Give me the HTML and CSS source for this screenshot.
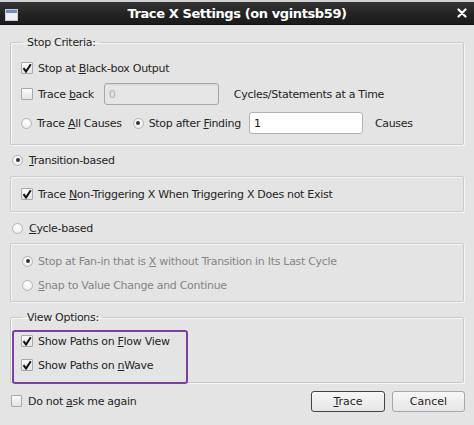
FILE: index.html
```html
<!DOCTYPE html>
<html lang="en">
<head>
    <meta charset="UTF-8">
    <title>Trace X Settings</title>
    <link rel="stylesheet" href="styles.css">
</head>
<body>
    <div class="window">
        <div class="titlebar">
            <svg class="win-icon" width="13" height="12" viewBox="0 0 13 12">
                <rect x="0.5" y="0.5" width="12" height="11" fill="#eef1f6" stroke="#c8ccd4"/>
                <rect x="1" y="1" width="11" height="3" fill="#6f8fc4"/>
            </svg>
            <div class="title">Trace X Settings (on vgintsb59)</div>
            <svg class="close" width="10" height="10" viewBox="0 0 10 10">
                <path d="M1.5 1.5 L8.5 8.5 M8.5 1.5 L1.5 8.5" stroke="#fff" stroke-width="2.2" stroke-linecap="round"/>
            </svg>
        </div>

        <div class="content">
            <fieldset class="group stop-group">
                <legend>Stop Criteria:</legend>
                <div class="row">
                    <span class="check on"><svg viewBox="0 0 12 12"><path d="M2.5 6.2 L5 9.5 L9.8 2.2" /></svg></span>
                    <span>Stop at <u>B</u>lack-box Output</span>
                </div>
                <div class="row row-back">
                    <span class="check"></span>
                    <span>Trace <u>b</u>ack</span>
                    <span class="field disabled field-back">0</span>
                    <span class="after-back">Cycles/Statements at a Time</span>
                </div>
                <div class="row row-find">
                    <span class="radio"></span>
                    <span>Trace <u>A</u>ll Causes</span>
                    <span class="radio on radio-gap"></span>
                    <span>Stop after <u>F</u>inding</span>
                    <span class="field field-find">1</span>
                    <span class="after-find">Causes</span>
                </div>
            </fieldset>

            <div class="row mode-row first-mode">
                <span class="radio on"></span>
                <span><u>T</u>ransition-based</span>
            </div>
            <div class="subframe sub-trans">
                <div class="row">
                    <span class="check on"><svg viewBox="0 0 12 12"><path d="M2.5 6.2 L5 9.5 L9.8 2.2" /></svg></span>
                    <span>Trace <u>N</u>on-Triggering X When Triggering X Does not Exist</span>
                </div>
            </div>

            <div class="row mode-row">
                <span class="radio"></span>
                <span><u>C</u>ycle-based</span>
            </div>
            <div class="subframe sub-cycle">
                <div class="row dim">
                    <span class="radio on"></span>
                    <span>Stop at Fan-in that is <u>X</u> without Transition in Its Last Cycle</span>
                </div>
                <div class="row dim">
                    <span class="radio"></span>
                    <span><u>S</u>nap to Value Change and Continue</span>
                </div>
            </div>

            <fieldset class="group view-group">
                <legend>View Options:</legend>
                <div class="row">
                    <span class="check on"><svg viewBox="0 0 12 12"><path d="M2.5 6.2 L5 9.5 L9.8 2.2" /></svg></span>
                    <span>Show Paths on <u>F</u>low View</span>
                </div>
                <div class="row">
                    <span class="check on"><svg viewBox="0 0 12 12"><path d="M2.5 6.2 L5 9.5 L9.8 2.2" /></svg></span>
                    <span>Show Paths on <u>n</u>Wave</span>
                </div>
                <div class="highlight"></div>
            </fieldset>

            <div class="footer">
                <div class="row ask">
                    <span class="check"></span>
                    <span>Do not <u>a</u>sk me again</span>
                </div>
                <div class="buttons">
                    <button class="btn default"><u>T</u>race</button>
                    <button class="btn">Cancel</button>
                </div>
            </div>
        </div>
    </div>
</body>
</html>
```

FILE: styles.css
```css
/* dialog look of an old GTK desktop */
body {
    margin: 0;
    background: #e4e4e4;
    font-family: "DejaVu Sans", "Liberation Sans", sans-serif;
    font-size: 11px;
    letter-spacing: -0.3px;
    color: #252525;
}
.window {
    width: 474px;
    height: 425px;
    overflow: hidden;
    border-top: 2px solid #d2d2d2;
    box-sizing: border-box;
}
.titlebar {
    height: 23px;
    background: linear-gradient(#343434, #222 60%, #1b1b1b);
    border-bottom: 1px solid #111;
    box-sizing: border-box;
    display: flex;
    align-items: center;
    padding: 0 6px 0 5px;
}
.win-icon {
    flex: none;
    margin-top: 4px;
}
.title {
    flex: 1;
    text-align: center;
    color: #fff;
    font-weight: bold;
    font-size: 13px;
    letter-spacing: -0.4px;
    margin-left: -1px;
}
.close {
    flex: none;
    margin-right: 1px;
}
.content {
    padding: 0 10px;
}
.group {
    margin: 11px 0 0;
    padding: 8px 10px 10px;
    border: 1px solid #c9c9c9;
    box-shadow: inset 1px 1px 0 #f7f7f7, 1px 1px 0 #f7f7f7;
    border-radius: 2px;
    position: relative;
}
.group legend {
    padding: 0 4px;
    margin-left: 2px;
    line-height: 13px;
}
.row {
    display: flex;
    align-items: center;
    height: 22px;
    white-space: nowrap;
}
.row-back {
    margin-top: 4px;
}
.row-find {
    margin-top: 7px;
}
u {
    text-decoration-thickness: 1px;
    text-underline-offset: 1px;
}
.check {
    flex: none;
    width: 12px;
    height: 12px;
    box-sizing: border-box;
    border: 1px solid #a9a9a9;
    border-radius: 1px;
    background: linear-gradient(#fbfbfb, #e3e3e3);
    margin-right: 5px;
    display: flex;
}
.check svg {
    width: 12px;
    height: 12px;
    margin: -1px;
}
.check path {
    fill: none;
    stroke: #111;
    stroke-width: 2;
}
.radio {
    flex: none;
    width: 11px;
    height: 11px;
    box-sizing: border-box;
    border: 1px solid #b4b4b4;
    border-radius: 50%;
    background: radial-gradient(circle at 50% 35%, #fff, #e9e9e9);
    margin-right: 5px;
    display: flex;
    align-items: center;
    justify-content: center;
}
.radio.on::after {
    content: "";
    width: 4px;
    height: 4px;
    border-radius: 50%;
    background: #333;
}
.radio-gap {
    margin-left: 11px;
}
.field {
    box-sizing: border-box;
    height: 22px;
    border: 1px solid #b2b2b2;
    border-radius: 3px;
    background: #fff;
    padding-left: 4px;
    display: flex;
    align-items: center;
    color: #111;
}
.field.disabled {
    background: #e6e6e6;
    border-color: #a8a8a8;
    color: #b0b0b0;
    box-shadow: inset 0 1px 1px #d4d4d4;
}
.field-back {
    width: 115px;
    margin-left: 10px;
}
.after-back {
    margin-left: 15px;
}
.field-find {
    width: 114px;
    margin-left: 8px;
}
.after-find {
    margin-left: 12px;
}
.mode-row {
    height: 16px;
    margin: 8px 0 0 2px;
}
.mode-row .radio {
    margin-right: 6px;
}
.first-mode {
    margin-top: 7px;
}
.subframe {
    border: 1px solid #cbcbcb;
    box-shadow: inset 1px 1px 0 #f5f5f5, 1px 1px 0 #f5f5f5;
    border-radius: 2px;
    padding: 0 10px;
}
.sub-trans {
    margin-top: 8px;
    height: 36px;
    box-sizing: border-box;
    display: flex;
    align-items: center;
}
.sub-cycle {
    margin-top: 7px;
    padding-top: 9px;
    padding-bottom: 8px;
    padding-left: 11px;
}
.sub-cycle .row {
    height: 16px;
}
.sub-cycle .row + .row {
    margin-top: 8px;
}
.dim {
    color: #858585;
}
.view-group {
    margin-top: 9px;
    padding-top: 6px;
    padding-bottom: 6px;
}
.view-group .row + .row {
    margin-top: 2px;
}
.highlight {
    position: absolute;
    left: 1px;
    top: 6px;
    width: 176px;
    height: 54px;
    box-sizing: border-box;
    border: 2px solid #7b3fa4;
    border-radius: 3px;
}
.footer {
    display: flex;
    align-items: center;
    justify-content: space-between;
    margin-top: 7px;
}
.ask {
    margin-left: 1px;
}
.ask .check {
    width: 11px;
    margin-right: 6px;
}
.buttons {
    display: flex;
    gap: 7px;
    margin-right: -1px;
}
.btn {
    width: 73px;
    height: 21px;
    padding: 0;
    font: inherit;
    color: #252525;
    border: 1px solid #a6a6a6;
    border-radius: 3px;
    background: linear-gradient(#f7f7f7, #e6e6e6);
}
.btn.default {
    border-color: #444;
    width: 74px;
}
```
